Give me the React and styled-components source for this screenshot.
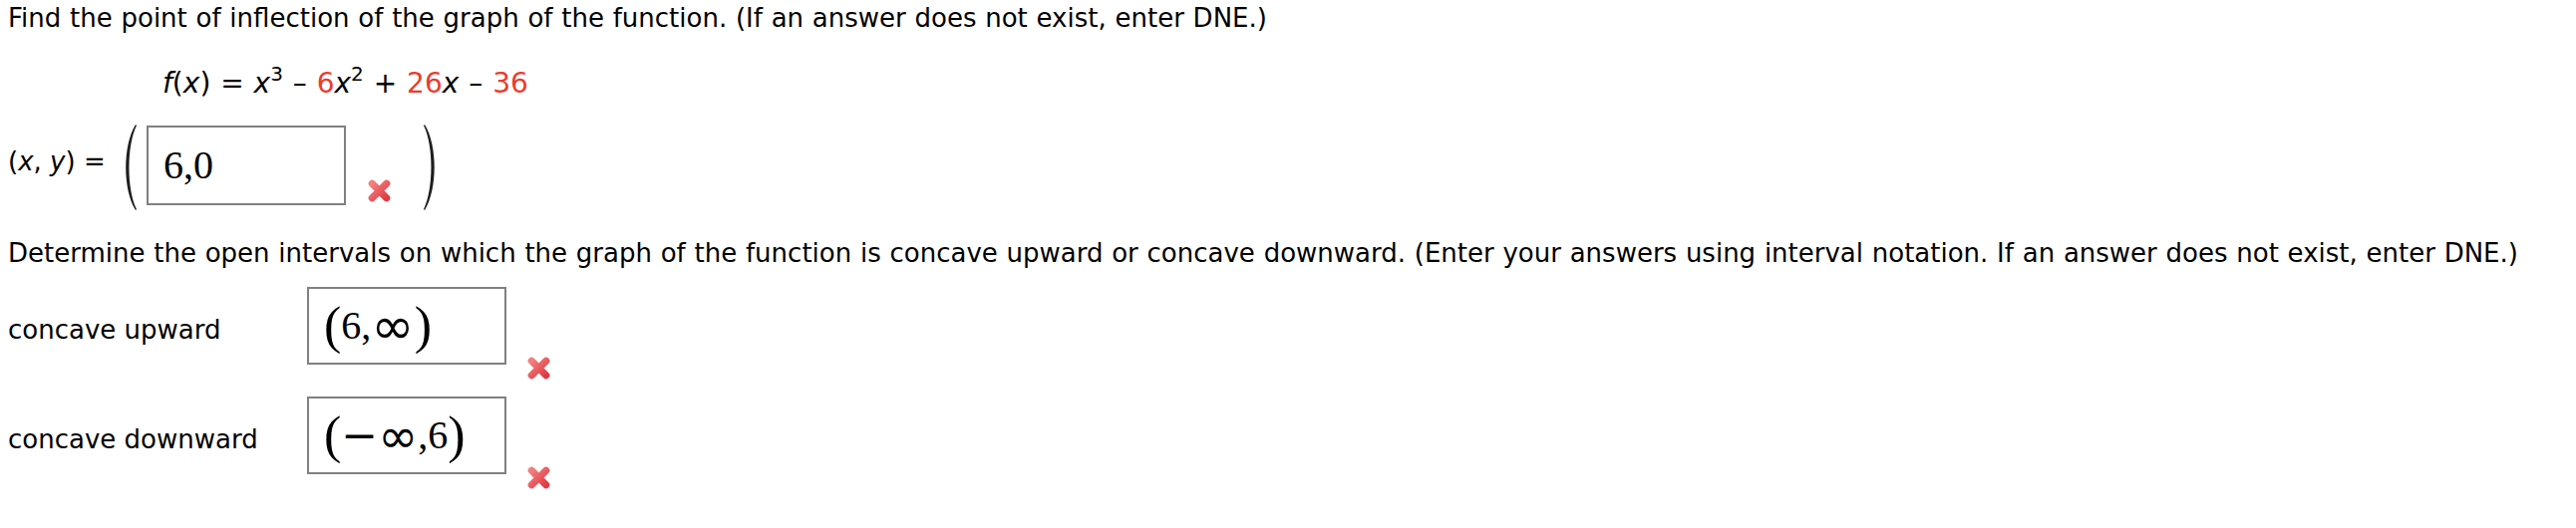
import React from "react";
import styled, { createGlobalStyle } from "styled-components";

const Global = createGlobalStyle`
  html, body { margin: 0; padding: 0; background: #fff; }
  body { font-family: "DejaVu Sans", Verdana, sans-serif; color: #000; }
`;

const Page = styled.div`
  padding: 2px 0 0 8px;
  font-family: "DejaVu Sans", Verdana, sans-serif;
  font-size: 26px;
  color: #000;
`;

const Prompt = styled.p`
  margin: ${(p) => p.$mt || 0}px 0 0 0;
  line-height: 32px;
  white-space: nowrap;
  word-spacing: 0.5px;
`;

const Formula = styled.div`
  margin: 34px 0 0 155px;
  font-size: 28px;
  line-height: 32px;
  white-space: nowrap;
  word-spacing: 1px;
`;

const Var = styled.i`
  font-style: italic;
`;

const Coef = styled.span`
  color: #ec3b2c;
`;

const Sup = styled.sup`
  font-size: 20px;
  line-height: 0;
  vertical-align: 12px;
`;

const Row = styled.div`
  display: flex;
  align-items: flex-start;
  margin-top: ${(p) => p.$mt}px;
`;

const Label = styled.div`
  width: ${(p) => p.$w}px;
  flex: none;
  line-height: ${(p) => p.$lh}px;
  white-space: nowrap;
`;

const ParenSvg = styled.svg`
  flex: none;
  width: 18px;
  height: 88px;
  margin-left: ${(p) => p.$ml || 0}px;
`;

const AnswerBox = styled.div`
  box-sizing: border-box;
  flex: none;
  width: 200px;
  height: ${(p) => p.$h}px;
  margin: ${(p) => p.$mt || 0}px 0 0 ${(p) => p.$ml || 0}px;
  border: 2px solid #808080;
  display: flex;
  align-items: center;
  padding-left: 15px;
  font-family: "Liberation Serif", "Times New Roman", serif;
  font-size: 40px;
  line-height: 40px;
  white-space: nowrap;
`;

const MathParen = styled.span`
  font-size: 52px;
`;

const MathSym = styled.span`
  font-family: "DejaVu Sans", serif;
  font-size: ${(p) => p.$fs || 40}px;
`;

const XSvg = styled.svg`
  flex: none;
  width: 27px;
  height: 27px;
  margin: ${(p) => p.$mt}px 0 0 ${(p) => p.$ml}px;
`;

const XMark = ({ mt, ml }) => (
  <XSvg viewBox="0 0 28 28" $mt={mt} $ml={ml}>
    <defs>
      <linearGradient id="xg" x1="0" y1="0" x2="1" y2="1">
        <stop offset="0" stopColor="#f47f80" />
        <stop offset="1" stopColor="#dd3c43" />
      </linearGradient>
    </defs>
    <path
      d="M6.5 6.5 L21.5 21.5 M21.5 6.5 L6.5 21.5"
      stroke="url(#xg)"
      strokeWidth="7.5"
      strokeLinecap="round"
      fill="none"
    />
  </XSvg>
);

const BigParen = ({ right, ml }) => (
  <ParenSvg viewBox="0 0 18 88" $ml={ml}>
    <path
      d="M16 1 C 3 22, 3 66, 16 87 L 17 86 C 7 66, 7 22, 17 2 Z"
      fill="#1e1e1e"
      transform={right ? "translate(18 0) scale(-1 1)" : undefined}
    />
  </ParenSvg>
);

export default function App() {
  return (
    <>
      <Global />
      <Page>
        <Prompt>
          Find the point of inflection of the graph of the function. (If an
          answer does not exist, enter DNE.)
        </Prompt>
        <Formula>
          <Var>f</Var>(<Var>x</Var>) = <Var>x</Var>
          <Sup>3</Sup> – <Coef>6</Coef>
          <Var>x</Var>
          <Sup>2</Sup> + <Coef>26</Coef>
          <Var>x</Var> – <Coef>36</Coef>
        </Formula>
        <Row $mt={24}>
          <Label $w={112} $lh={76}>
            (<Var>x</Var>, <Var>y</Var>) =
          </Label>
          <BigParen />
          <AnswerBox $h={80} $mt={2} $ml={9}>
            6,0
          </AnswerBox>
          <XMark mt={54} ml={20} />
          <BigParen right ml={30} />
        </Row>
        <Prompt $mt={26}>
          Determine the open intervals on which the graph of the function is
          concave upward or concave downward. (Enter your answers using
          interval notation. If an answer does not exist, enter DNE.)
        </Prompt>
        <Row $mt={18}>
          <Label $w={300} $lh={86}>
            concave upward
          </Label>
          <AnswerBox $h={78}>
            <MathParen>(</MathParen>6,<MathSym $fs={52}>∞</MathSym>
            <MathParen>)</MathParen>
          </AnswerBox>
          <XMark mt={68} ml={19} />
        </Row>
        <Row $mt={15}>
          <Label $w={300} $lh={86}>
            concave downward
          </Label>
          <AnswerBox $h={78}>
            <MathParen>(</MathParen>
            <MathSym $fs={44}>−</MathSym>
            <MathSym $fs={48}>∞</MathSym>,6<MathParen>)</MathParen>
          </AnswerBox>
          <XMark mt={68} ml={19} />
        </Row>
      </Page>
    </>
  );
}
